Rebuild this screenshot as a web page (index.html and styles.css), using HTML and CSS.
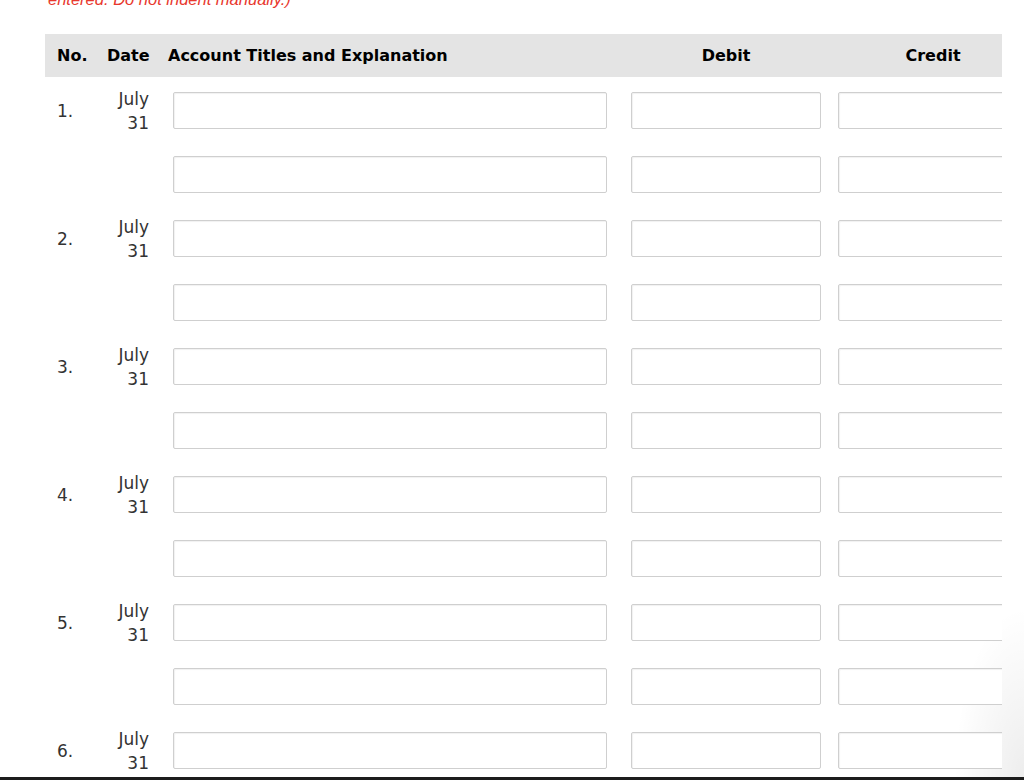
FILE: index.html
```html
<!DOCTYPE html>
<html>
<head>
<meta charset="utf-8">
<link rel="stylesheet" href="styles.css">
</head>
<body>
<div class="page">
  <p class="note">entered. Do not indent manually.)</p>
  <div class="journal">
    <div class="row head">
      <div class="c-no">No.</div>
      <div class="c-date">Date</div>
      <div class="c-acct">Account Titles and Explanation</div>
      <div class="c-debit">Debit</div>
      <div class="c-credit">Credit</div>
    </div>

    <div class="row entry">
      <div class="c-no">1.</div>
      <div class="c-date">July<br>31</div>
      <div class="c-acct"><input class="field acct"></div>
      <div class="c-debit"><input class="field amt"></div>
      <div class="c-credit"><input class="field amt"></div>
    </div>
    <div class="row entry">
      <div class="c-no"></div>
      <div class="c-date"></div>
      <div class="c-acct"><input class="field acct"></div>
      <div class="c-debit"><input class="field amt"></div>
      <div class="c-credit"><input class="field amt"></div>
    </div>

    <div class="row entry">
      <div class="c-no">2.</div>
      <div class="c-date">July<br>31</div>
      <div class="c-acct"><input class="field acct"></div>
      <div class="c-debit"><input class="field amt"></div>
      <div class="c-credit"><input class="field amt"></div>
    </div>
    <div class="row entry">
      <div class="c-no"></div>
      <div class="c-date"></div>
      <div class="c-acct"><input class="field acct"></div>
      <div class="c-debit"><input class="field amt"></div>
      <div class="c-credit"><input class="field amt"></div>
    </div>

    <div class="row entry">
      <div class="c-no">3.</div>
      <div class="c-date">July<br>31</div>
      <div class="c-acct"><input class="field acct"></div>
      <div class="c-debit"><input class="field amt"></div>
      <div class="c-credit"><input class="field amt"></div>
    </div>
    <div class="row entry">
      <div class="c-no"></div>
      <div class="c-date"></div>
      <div class="c-acct"><input class="field acct"></div>
      <div class="c-debit"><input class="field amt"></div>
      <div class="c-credit"><input class="field amt"></div>
    </div>

    <div class="row entry">
      <div class="c-no">4.</div>
      <div class="c-date">July<br>31</div>
      <div class="c-acct"><input class="field acct"></div>
      <div class="c-debit"><input class="field amt"></div>
      <div class="c-credit"><input class="field amt"></div>
    </div>
    <div class="row entry">
      <div class="c-no"></div>
      <div class="c-date"></div>
      <div class="c-acct"><input class="field acct"></div>
      <div class="c-debit"><input class="field amt"></div>
      <div class="c-credit"><input class="field amt"></div>
    </div>

    <div class="row entry">
      <div class="c-no">5.</div>
      <div class="c-date">July<br>31</div>
      <div class="c-acct"><input class="field acct"></div>
      <div class="c-debit"><input class="field amt"></div>
      <div class="c-credit"><input class="field amt"></div>
    </div>
    <div class="row entry">
      <div class="c-no"></div>
      <div class="c-date"></div>
      <div class="c-acct"><input class="field acct"></div>
      <div class="c-debit"><input class="field amt"></div>
      <div class="c-credit"><input class="field amt"></div>
    </div>

    <div class="row entry">
      <div class="c-no">6.</div>
      <div class="c-date">July<br>31</div>
      <div class="c-acct"><input class="field acct"></div>
      <div class="c-debit"><input class="field amt"></div>
      <div class="c-credit"><input class="field amt"></div>
    </div>
    <div class="row entry">
      <div class="c-no"></div>
      <div class="c-date"></div>
      <div class="c-acct"><input class="field acct"></div>
      <div class="c-debit"><input class="field amt"></div>
      <div class="c-credit"><input class="field amt"></div>
    </div>
  </div>
</div>
<div class="edge"></div>
</body>
</html>
```

FILE: styles.css
```css
html, body {
  margin: 0;
  padding: 0;
  background: #ffffff;
  height: 780px;
  overflow: hidden;
}

.page {
  height: 777px;
  overflow: hidden;
  background: radial-gradient(ellipse 70px 170px at 100% 100%, rgba(0,0,0,0.07), rgba(0,0,0,0) 100%) no-repeat;
}

.note {
  margin: -10px 0 0 48px;
  height: 18px;
  font-family: "Liberation Sans", Arial, sans-serif;
  font-style: italic;
  font-size: 16.5px;
  line-height: 18px;
  color: #e8382e;
}

.journal {
  margin: 26px 0 0 45px;
  width: 957px;
  overflow: hidden;
}

.row {
  display: flex;
  align-items: center;
}

.head {
  height: 43px;
  background: #e4e4e4;
  font-family: "DejaVu Sans", Verdana, sans-serif;
  font-weight: bold;
  font-size: 16px;
  color: #000;
}

.entry {
  padding: 15px 0 12px;
  font-family: "DejaVu Sans", Verdana, sans-serif;
  font-size: 17px;
  line-height: 24px;
  color: #333;
}

.c-no {
  width: 55px;
  flex: none;
  padding-left: 12px;
  box-sizing: border-box;
}

.c-date {
  width: 61px;
  flex: none;
  padding-right: 12px;
  box-sizing: border-box;
  text-align: right;
  height: 37px;
  display: flex;
  flex-direction: column;
  justify-content: center;
  white-space: nowrap;
}

.head .c-date {
  height: auto;
  text-align: left;
  padding: 0 0 0 7px;
}

.c-acct {
  width: 458px;
  flex: none;
  padding-left: 12px;
  box-sizing: border-box;
}

.head .c-acct {
  padding-left: 7px;
}

.c-debit {
  width: 207px;
  flex: none;
  padding: 0 5px 0 12px;
  box-sizing: border-box;
}

.c-credit {
  width: 202px;
  flex: none;
  padding-left: 12px;
  box-sizing: border-box;
}

.head .c-debit,
.head .c-credit {
  text-align: center;
}

.field {
  display: block;
  height: 37px;
  margin: 0;
  padding: 0;
  box-sizing: border-box;
  border: 1px solid #cfcfcf;
  border-radius: 2px;
  box-shadow: inset 1px 1px 1px rgba(0,0,0,0.06);
  background: #fff;
  outline: none;
}

.acct {
  width: 434px;
}

.amt {
  width: 190px;
}

.edge {
  height: 3px;
  background: #1c1c1c;
}
```
